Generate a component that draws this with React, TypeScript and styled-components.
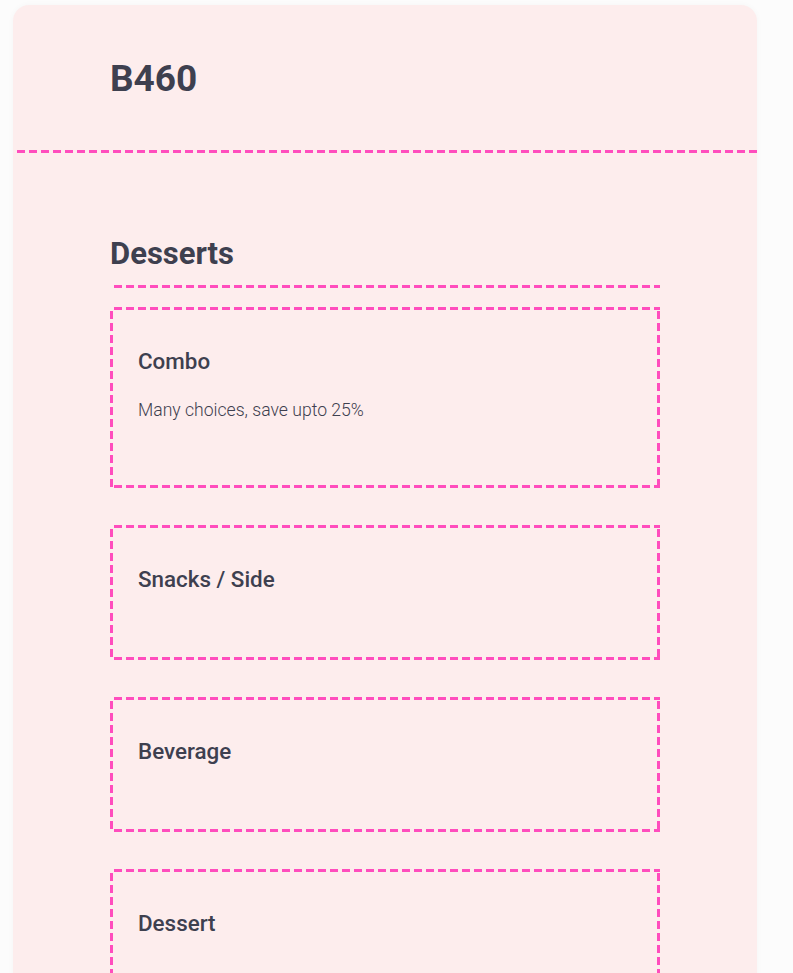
import React from 'react';
import styled, { createGlobalStyle } from 'styled-components';

const pink = '#ff4dbd';
const ink = '#3e404f';

// dash 8px, gap 4px, starting with the gap
const dashX = `repeating-linear-gradient(90deg, transparent 0 4px, ${pink} 4px 12px)`;
const dashY = `repeating-linear-gradient(180deg, transparent 0 4px, ${pink} 4px 12px)`;

const GlobalStyle = createGlobalStyle`
  html, body {
    margin: 0;
    padding: 0;
    background: #fcfcfc;
  }
  body {
    font-family: Roboto, "Noto Sans", sans-serif;
    color: ${ink};
  }
`;

const Page = styled.div`
  padding: 5px 36px 0 13px;
`;

const Menu = styled.div`
  background: #fdeded;
  border-radius: 16px 16px 0 0;
  box-shadow: 0 0 6px rgba(0, 0, 0, 0.03);
  padding-bottom: 40px;
`;

const Header = styled.header`
  padding: 52px 0 50px 97px;
`;

const StoreName = styled.h1`
  margin: 0;
  font-size: 37px;
  font-weight: 700;
  line-height: normal;
`;

const Rule = styled.div`
  height: 3px;
  background: ${dashX};
`;

const Section = styled.section`
  width: 550px;
  margin: 82px 0 0 97px;
`;

const SectionTitle = styled.h2`
  margin: 0 0 13px;
  font-size: 31px;
  font-weight: 700;
  line-height: normal;
`;

const List = styled.div`
  display: flex;
  flex-direction: column;
  gap: 37px;
  margin-top: 19px;
`;

const Category = styled.div`
  padding: 41px 28px 42px;
  background:
    ${dashX} left top / 100% 3px no-repeat,
    ${dashX} left bottom / 100% 3px no-repeat,
    ${dashY} left top / 3px 100% no-repeat,
    ${dashY} right top / 3px 100% no-repeat;
`;

const CategoryName = styled.h3`
  margin: 0 0 26px;
  font-size: 22.4px;
  font-weight: 500;
  line-height: normal;
`;

const CategoryNote = styled.p`
  margin: 0 0 26px;
  font-size: 17.6px;
  font-weight: 300;
  line-height: normal;
`;

const categories = [
  { name: 'Combo', note: 'Many choices, save upto 25%' },
  { name: 'Snacks / Side' },
  { name: 'Beverage' },
  { name: 'Dessert' },
];

export default function App() {
  return (
    <>
      <GlobalStyle />
      <Page>
        <Menu>
          <Header>
            <StoreName>B460</StoreName>
          </Header>
          <Rule />
          <Section>
            <SectionTitle>Desserts</SectionTitle>
            <Rule />
            <List>
              {categories.map((c) => (
                <Category key={c.name}>
                  <CategoryName>{c.name}</CategoryName>
                  {c.note && <CategoryNote>{c.note}</CategoryNote>}
                </Category>
              ))}
            </List>
          </Section>
        </Menu>
      </Page>
    </>
  );
}
